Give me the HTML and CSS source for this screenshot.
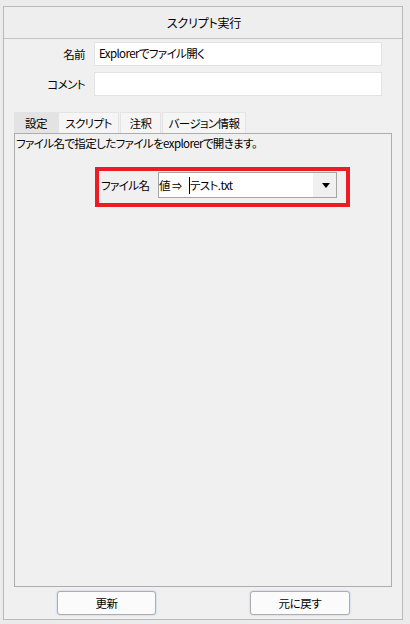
FILE: index.html
```html
<!DOCTYPE html>
<html lang="ja">
<head>
<meta charset="utf-8">
<link rel="stylesheet" href="styles.css">
</head>
<body>
<div class="frame">
  <div class="header">スクリプト実行</div>
  <div class="form">
    <div class="row">
      <label class="lbl">名前</label>
      <div class="input">Explorerでファイル開く</div>
    </div>
    <div class="row">
      <label class="lbl">コメント</label>
      <div class="input"></div>
    </div>
  </div>
  <div class="tabs">
    <div class="tab t1 sel">設定</div>
    <div class="tab t2">スクリプト</div>
    <div class="tab t3">注釈</div>
    <div class="tab t4">バージョン情報</div>
  </div>
  <div class="panel">
    <div class="desc">ファイル名で指定したファイルをexplorerで開きます。</div>
    <div class="redbox">
      <span class="flabel">ファイル名</span>
      <div class="combo">
        <div class="ctext"><span class="val">値<span class="arr">⇒</span></span><span class="caret"></span><span>テスト.txt</span></div>
        <div class="drop"><svg width="8" height="5" viewBox="0 0 8 5"><path d="M0 0H8L4 5Z" fill="#000"/></svg></div>
      </div>
    </div>
  </div>
  <div class="buttons">
    <button class="btn b1">更新</button>
    <button class="btn b2">元に戻す</button>
  </div>
</div>
</body>
</html>
```
FILE: styles.css
```css
html, body { margin: 0; padding: 0; }
body {
  background: #ebebeb;
  width: 410px;
  height: 624px;
  font-family: "Noto Sans CJK JP", "Noto Sans", sans-serif;
  font-size: 11.5px;
  font-weight: 400;
  letter-spacing: -0.6px;
  font-feature-settings: "palt";
  color: #000;
  overflow: hidden;
}
.frame {
  box-sizing: border-box;
  margin: 6px 0 0 3px;
  width: 400px;
  height: 614px;
  border: 1px solid #b9b9b9;
  background: #f0f0f0;
  display: flex;
  flex-direction: column;
}
.header {
  box-sizing: border-box;
  height: 32px;
  border-bottom: 1px solid #c4c4c4;
  background: #eeeeee;
  display: flex;
  align-items: center;
  justify-content: center;
  font-size: 12px;
  letter-spacing: -0.2px;
  padding-left: 2px;
}
.form {
  padding-top: 3px;
  display: flex;
  flex-direction: column;
  gap: 6px;
}
.row { display: flex; height: 24px; align-items: center; }
.lbl {
  width: 81px;
  margin-right: 9px;
  text-align: right;
}
.input {
  box-sizing: border-box;
  width: 288px;
  height: 24px;
  background: #fff;
  border: 1px solid #e3e3e3;
  padding-left: 4px;
  line-height: 21px;
}
.tabs {
  margin-top: 16px;
  margin-left: 10px;
  height: 21px;
  display: flex;
}
.tab {
  box-sizing: border-box;
  height: 21px;
  line-height: 20px;
  text-align: center;
  background: #f5f5f5;
  border: 1px solid #e4e4e4;
  border-bottom: none;
}
.tab.sel { background: #e3e3e3; border-color: #e3e3e3; }
.t1 { width: 44px; }
.t2 { width: 61px; margin-left: 0; }
.t3 { width: 41px; margin-left: 1px; }
.t4 { width: 84px; margin-left: 1px; }
.panel {
  box-sizing: border-box;
  margin-left: 10px;
  width: 378px;
  height: 454px;
  border: 1px solid #adadad;
  background: #f0f0f0;
}
.desc {
  padding-left: 1px;
  height: 18px;
  line-height: 18px;
}
.redbox {
  box-sizing: border-box;
  margin: 15px 0 0 80px;
  width: 255px;
  height: 40px;
  border: 4px solid #ed1c24;
  display: flex;
  align-items: flex-start;
  padding-top: 1px;
}
.flabel {
  margin-left: 2px;
  width: 57px;
  line-height: 26px;
}
.combo {
  box-sizing: border-box;
  width: 179px;
  height: 26px;
  border: 1px solid #a5a5a5;
  background: #fff;
  display: flex;
}
.ctext {
  flex: 1;
  display: flex;
  align-items: center;
  padding-left: 0px;
  line-height: 24px;
}
.val { width: 30px; }
.arr { font-size: 10px; margin-left: 2px; }
.caret {
  display: inline-block;
  width: 1px;
  height: 17px;
  background: #000;
}
.drop {
  width: 21px;
  background: #f0f0f0;
  display: flex;
  align-items: center;
  justify-content: center;
  padding-left: 2px;
}
.buttons {
  display: flex;
  margin-top: 4px;
  height: 24px;
}
.btn {
  box-sizing: border-box;
  height: 24px;
  border: 1px solid #adadad;
  border-radius: 3px;
  background: #fbfbfb;
  box-shadow: 0 0 2px rgba(110, 165, 235, 0.55);
  font-family: inherit;
  font-size: 11.5px;
  font-weight: 400;
  letter-spacing: -0.4px;
  font-feature-settings: "palt";
  color: #000;
  padding: 0;
  line-height: 20px;
}
.b1 { margin-left: 53px; width: 99px; }
.b2 { margin-left: 94px; width: 100px; }
```
